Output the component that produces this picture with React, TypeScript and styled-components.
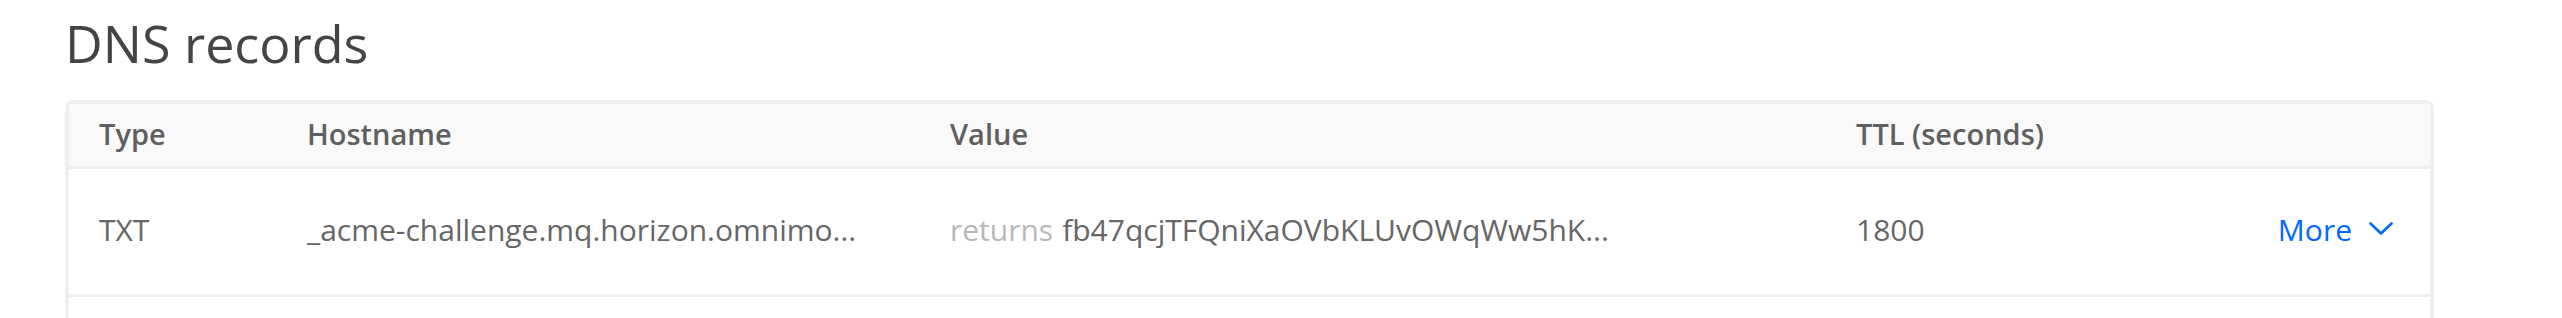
import styled, { createGlobalStyle } from "styled-components";

const GlobalStyle = createGlobalStyle`
  html, body {
    margin: 0;
    padding: 0;
    background: #fff;
  }
  body {
    font-family: "Open Sans", Lato, sans-serif;
    -webkit-font-smoothing: antialiased;
  }
`;

type DnsRecord = {
  type: string;
  hostname: string;
  value: string;
  ttl: number;
};

const records: DnsRecord[] = [
  {
    type: "TXT",
    hostname: "_acme-challenge.mq.horizon.omnimo...",
    value: "fb47qcjTFQniXaOVbKLUvOWqWw5hK...",
    ttl: 1800,
  },
];

const Chevron = () => (
  <svg width="24" height="13" viewBox="0 0 24 13" fill="none">
    <polyline
      points="1.5,1.5 12,11.5 22.5,1.5"
      stroke="currentColor"
      strokeWidth="2.6"
      strokeLinecap="round"
      strokeLinejoin="round"
    />
  </svg>
);

export default function App() {
  return (
    <Page>
      <GlobalStyle />
      <Title>DNS records</Title>
      <Table>
        <HeadRow>
          <HeadCell>Type</HeadCell>
          <HeadCell>Hostname</HeadCell>
          <HeadCell>Value</HeadCell>
          <HeadCell>TTL (seconds)</HeadCell>
          <HeadCell />
        </HeadRow>
        {records.map((r) => (
          <Row key={r.hostname}>
            <Cell>{r.type}</Cell>
            <Cell>{r.hostname}</Cell>
            <Cell>
              <Muted>returns</Muted>
              {r.value}
            </Cell>
            <Cell>{r.ttl}</Cell>
            <ActionCell>
              <MoreButton type="button">
                More <Chevron />
              </MoreButton>
            </ActionCell>
          </Row>
        ))}
        <Row />
      </Table>
    </Page>
  );
}

const Page = styled.div`
  padding: 0 128px 0 65px;
  height: 318px;
  overflow: hidden;
`;

const Title = styled.h1`
  margin: 0;
  padding-top: 8px;
  height: 100px;
  box-sizing: border-box;
  font-size: 52px;
  font-weight: 400;
  line-height: 70px;
  color: #444;
  letter-spacing: 0;
`;

const Table = styled.div`
  width: 2369px;
  border: 4px solid #efefef;
  border-radius: 8px 8px 0 0;
  box-sizing: border-box;
  display: grid;
  grid-template-columns: 208px 643px 906px 1fr auto;
`;

const HeadRow = styled.div`
  display: contents;
`;

const HeadCell = styled.div`
  height: 65px;
  box-sizing: border-box;
  padding: 0 0 3px 30px;
  background: #f9f9f9;
  border-bottom: 3px solid #efefef;
  display: flex;
  align-items: center;
  font-size: 29px;
  font-weight: 600;
  color: #5f5f5f;
  white-space: nowrap;
`;

const Row = styled.div`
  display: contents;

  &:empty::after {
    content: "";
    grid-column: 1 / -1;
    height: 60px;
  }
`;

const Cell = styled.div`
  height: 128px;
  box-sizing: border-box;
  padding: 0 0 5px 30px;
  border-bottom: 3px solid #efefef;
  display: flex;
  align-items: center;
  font-size: 30px;
  color: #666;
  white-space: nowrap;
`;

const Muted = styled.span`
  color: #b8b8b8;
  margin-right: 9px;
`;

const ActionCell = styled(Cell)`
  padding: 0 37px 5px 0;
  justify-content: flex-end;
`;

const MoreButton = styled.button`
  display: flex;
  align-items: center;
  gap: 17px;
  padding: 0;
  border: none;
  background: none;
  font-family: inherit;
  font-size: 30px;
  color: #0069ff;
  cursor: pointer;

  svg {
    margin-top: -2px;
  }
`;
